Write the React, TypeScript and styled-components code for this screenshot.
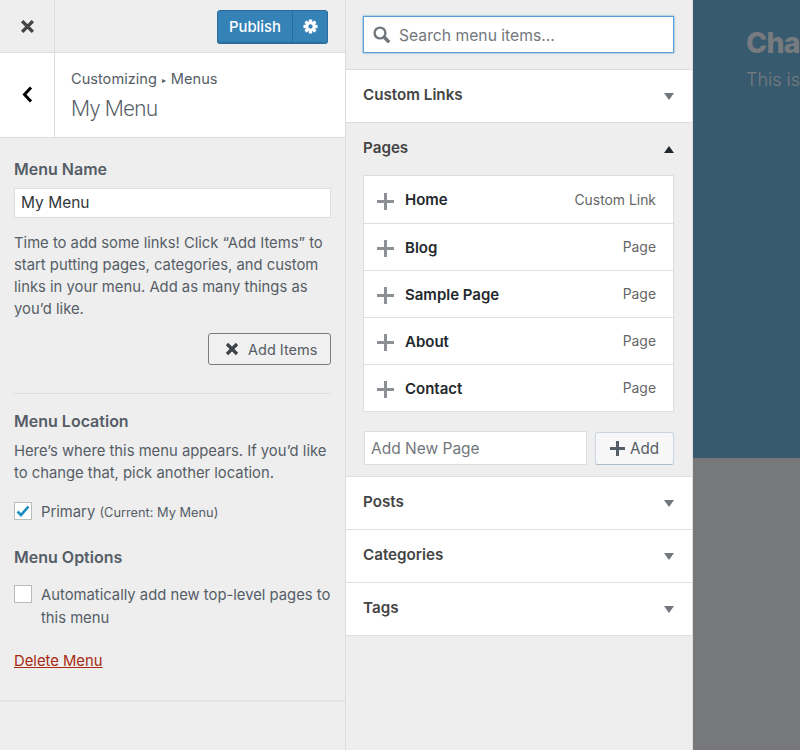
import { createGlobalStyle, styled } from "styled-components";
import type { ReactNode } from "react";

const GlobalStyle = createGlobalStyle`
  html, body {
    margin: 0;
    height: 100%;
    overflow: hidden;
    background: #eeeeee;
    font-family: Inter, "Liberation Sans", sans-serif;
    -webkit-font-smoothing: antialiased;
  }
  * { box-sizing: border-box; }
`;

const Page = styled.div`
  display: grid;
  grid-template-columns: 346px 347px 107px;
  width: 800px;
  height: 750px;
  overflow: hidden;
`;

const Sidebar = styled.aside`
  display: flex;
  flex-direction: column;
  border-right: 1px solid #dddddd;
  background: #eeeeee;
  color: #555d66;
`;

const TopBar = styled.header`
  display: flex;
  height: 53px;
  border-bottom: 1px solid #dddddd;
`;

const CloseButton = styled.div`
  width: 55px;
  display: flex;
  align-items: center;
  justify-content: center;
  padding-left: 1px;
  border-right: 1px solid #dddddd;
  color: #444;
`;

const PublishArea = styled.div`
  flex: 1;
  display: flex;
  justify-content: flex-end;
  padding: 10px 17px 0 0;
`;

const PublishGroup = styled.div`
  display: flex;
  height: 33px;
  border-radius: 3px;
  background: #3582b7;
  border: 1px solid #2a6d9c;
  color: #fff;
  box-shadow: 0 1px 0 #2a6d9c;
`;

const PublishLabel = styled.span`
  display: flex;
  align-items: center;
  padding: 0 11px;
  width: 75px;
  font-size: 14.8px;
  font-weight: 500;
  border-right: 1px solid #2a6d9c;
`;

const PublishGear = styled.span`
  width: 34px;
  display: flex;
  align-items: center;
  justify-content: center;
`;

const TitleBar = styled.div`
  display: flex;
  height: 85px;
  background: #fff;
  border-bottom: 1px solid #dddddd;
`;

const BackButton = styled.div`
  width: 55px;
  display: flex;
  align-items: center;
  justify-content: center;
  padding-bottom: 2px;
  border-right: 1px solid #dddddd;
`;

const TitleText = styled.div`
  padding: 17px 0 0 16px;
`;

const Crumb = styled.div`
  font-size: 14.6px;
  line-height: 18px;
  color: #555d66;
`;

const CrumbArrow = styled.span`
  font-size: 8px;
  margin: 0 5px;
  vertical-align: 1px;
`;

const PanelTitle = styled.div`
  font-family: Roboto, Inter, sans-serif;
  font-size: 22px;
  font-weight: 300;
  line-height: 28px;
  margin-top: 6px;
  letter-spacing: -0.4px;
  color: #555d66;
`;

const Controls = styled.div`
  padding: 21px 14px 0;
  height: 564px;
  border-bottom: 2px solid #e4e4e4;
  flex: none;
`;

const Heading = styled.h3<{ $top?: number }>`
  margin: ${({ $top }) => $top ?? 0}px 0 0;
  font-size: 16px;
  line-height: 20px;
  font-weight: 600;
  color: #555d66;
`;

const NameInput = styled.div`
  height: 30px;
  margin-top: 9px;
  padding: 0 0 1px 6px;
  display: flex;
  align-items: center;
  background: #fff;
  border: 1px solid #dddddd;
  font-size: 15.5px;
  color: #32373c;
`;

const Help = styled.p<{ $top: number }>`
  margin: ${({ $top }) => $top}px 0 0;
  font-size: 14.8px;
  line-height: 22px;
  color: #555d66;
`;

const ButtonRow = styled.div`
  display: flex;
  justify-content: flex-end;
  margin-top: 13px;
`;

const AddItemsButton = styled.div`
  width: 123px;
  height: 32px;
  display: flex;
  align-items: center;
  gap: 9px;
  padding-left: 16px;
  background: #f0f0f0;
  border: 1px solid #777d83;
  border-radius: 3px;
  font-size: 14.5px;
  color: #555d66;
  & > svg {
    color: #3c4146;
  }
`;

const Divider = styled.hr`
  margin: 28px 0 0;
  border: 0;
  border-top: 1px solid #dddddd;
`;

const CheckRow = styled.label<{ $top: number }>`
  display: flex;
  gap: 9px;
  margin-top: ${({ $top }) => $top}px;
  font-size: 14.8px;
  line-height: 23px;
  color: #555d66;
`;

const CheckBox = styled.span`
  flex: none;
  width: 18px;
  height: 18px;
  margin-top: 1px;
  display: flex;
  align-items: center;
  justify-content: center;
  background: #fff;
  border: 1px solid #bbbbbb;
`;

const Current = styled.span`
  font-size: 12.8px;
`;

const DeleteLink = styled.a`
  display: block;
  margin-top: 21px;
  font-size: 14.8px;
  line-height: 20px;
  color: #a82a12;
  text-decoration: underline;
`;

const ItemsPanel = styled.section`
  background: #eeeeee;
  border-right: 1px solid #dddddd;
  color: #32373c;
`;

const SearchArea = styled.div`
  height: 70px;
  padding: 16px 18px 0 17px;
  border-bottom: 1px solid #dddddd;
`;

const SearchBox = styled.div`
  height: 37px;
  display: flex;
  align-items: center;
  gap: 8px;
  padding: 1px 0 0 9px;
  background: #fff;
  border: 1px solid #5b9dd9;
  box-shadow: 0 0 2px rgba(30, 140, 190, 0.8);
  font-size: 15.7px;
  color: #72777c;
`;

const SectionHead = styled.div<{ $open?: boolean }>`
  height: ${({ $open }) => ($open ? 52 : 53)}px;
  padding: 0 18px 3px 17px;
  display: flex;
  align-items: center;
  justify-content: space-between;
  background: ${({ $open }) => ($open ? "transparent" : "#fff")};
  border-bottom: ${({ $open }) => ($open ? "0" : "1px solid #dddddd")};
  font-size: 15.2px;
  font-weight: 600;
  color: #444;
`;

const Caret = styled.span<{ $up?: boolean }>`
  width: 0;
  height: 0;
  margin-top: 3px;
  border-left: 5px solid transparent;
  border-right: 5px solid transparent;
  ${({ $up }) =>
    $up ? "border-bottom: 7px solid #23282d;" : "border-top: 7px solid #72777c;"}
`;

const PagesBody = styled.div`
  padding: 0 18px 11px 17px;
  border-bottom: 1px solid #dddddd;
`;

const PageList = styled.div`
  background: #fff;
  border: 1px solid #dddddd;
`;

const PageRow = styled.div`
  height: 47px;
  display: flex;
  align-items: center;
  padding: 0 17px 0 13px;
  font-size: 15px;
  & + & {
    border-top: 1px solid #dddddd;
  }
  & > svg {
    margin-top: 3px;
  }
`;

const PageName = styled.span`
  flex: 1;
  margin-left: 11px;
  font-weight: 600;
  color: #23282d;
`;

const PageType = styled.span`
  font-size: 13.9px;
  color: #666;
`;

const AddRow = styled.div`
  display: flex;
  justify-content: space-between;
  padding: 19px 0 0 1px;
`;

const NewPageInput = styled.div`
  width: 223px;
  height: 34px;
  display: flex;
  align-items: center;
  padding: 1px 0 0 6px;
  background: #fff;
  border: 1px solid #dddddd;
  font-size: 15.5px;
  color: #72777c;
`;

const AddButton = styled.div`
  width: 79px;
  height: 33px;
  margin-top: 1px;
  display: flex;
  align-items: center;
  justify-content: center;
  gap: 5px;
  background: #f7f7f7;
  border: 1px solid #cad5df;
  border-bottom-color: #a9bccb;
  border-radius: 3px;
  font-size: 15.2px;
  color: #555d66;
`;

const Preview = styled.main`
  display: flex;
  flex-direction: column;
  overflow: hidden;
  background: #77787c;
`;

const Hero = styled.div`
  height: 458px;
  padding: 25px 0 0 53px;
  background: #375a6f;
  color: #777a7e;
  white-space: nowrap;
`;

const HeroTitle = styled.div`
  font-size: 28.5px;
  line-height: 36px;
  font-weight: 800;
  letter-spacing: -0.8px;
`;

const HeroText = styled.div`
  margin-top: 6px;
  font-size: 18px;
  line-height: 26px;
  font-weight: 300;
`;

function CloseIcon({ size }: { size: number }) {
  return (
    <svg width={size} height={size} viewBox="0 0 14 14" aria-hidden="true">
      <path d="M2 2l10 10M12 2L2 12" stroke="currentColor" strokeWidth="3.2" />
    </svg>
  );
}

function GearIcon() {
  const teeth = [0, 45, 90, 135];
  return (
    <svg width="15" height="15" viewBox="0 0 16 16" aria-hidden="true">
      {teeth.map((angle) => (
        <rect
          key={angle}
          x="6.2"
          y="0.5"
          width="3.6"
          height="15"
          rx="0.6"
          fill="#fff"
          transform={`rotate(${angle} 8 8)`}
        />
      ))}
      <circle cx="8" cy="8" r="5.3" fill="#fff" />
      <circle cx="8" cy="8" r="2.3" fill="#3582b7" />
    </svg>
  );
}

function PlusIcon({ color, size, weight }: { color: string; size: number; weight: number }) {
  return (
    <svg width={size} height={size} viewBox={`0 0 ${size} ${size}`} aria-hidden="true">
      <path
        d={`M0 ${size / 2}H${size}M${size / 2} 0V${size}`}
        stroke={color}
        strokeWidth={weight}
      />
    </svg>
  );
}

function Section({ title }: { title: string }) {
  return (
    <SectionHead>
      {title}
      <Caret />
    </SectionHead>
  );
}

function PageItem({ name, type }: { name: string; type: string }): ReactNode {
  return (
    <PageRow>
      <PlusIcon color="#8c8f94" size={17} weight={3} />
      <PageName>{name}</PageName>
      <PageType>{type}</PageType>
    </PageRow>
  );
}

export default function App() {
  return (
    <>
      <GlobalStyle />
      <Page>
        <Sidebar>
          <TopBar>
            <CloseButton>
              <CloseIcon size={15} />
            </CloseButton>
            <PublishArea>
              <PublishGroup>
                <PublishLabel>Publish</PublishLabel>
                <PublishGear>
                  <GearIcon />
                </PublishGear>
              </PublishGroup>
            </PublishArea>
          </TopBar>
          <TitleBar>
            <BackButton>
              <svg width="11" height="17" viewBox="0 0 11 17" aria-hidden="true">
                <path d="M9 1.5L2.5 8.5L9 15.5" fill="none" stroke="#000" strokeWidth="3" />
              </svg>
            </BackButton>
            <TitleText>
              <Crumb>
                Customizing<CrumbArrow>▸</CrumbArrow>Menus
              </Crumb>
              <PanelTitle>My Menu</PanelTitle>
            </TitleText>
          </TitleBar>
          <Controls>
            <Heading>Menu Name</Heading>
            <NameInput>My Menu</NameInput>
            <Help $top={14}>
              Time to add some links! Click “Add Items” to start putting pages, categories, and
              custom links in your menu. Add as many things as you’d like.
            </Help>
            <ButtonRow>
              <AddItemsButton>
                <CloseIcon size={14} />
                Add Items
              </AddItemsButton>
            </ButtonRow>
            <Divider />
            <Heading $top={17}>Menu Location</Heading>
            <Help $top={9}>
              Here’s where this menu appears. If you’d like to change that, pick another location.
            </Help>
            <CheckRow $top={17}>
              <CheckBox>
                <svg width="14" height="12" viewBox="0 0 14 12" aria-hidden="true">
                  <path d="M1.5 6.5L5 10L12.5 1.5" fill="none" stroke="#1e8cbe" strokeWidth="2.6" />
                </svg>
              </CheckBox>
              <span>
                Primary <Current>(Current: My Menu)</Current>
              </span>
            </CheckRow>
            <Heading $top={23}>Menu Options</Heading>
            <CheckRow $top={17}>
              <CheckBox />
              <span>Automatically add new top-level pages to this menu</span>
            </CheckRow>
            <DeleteLink>Delete Menu</DeleteLink>
          </Controls>
        </Sidebar>
        <ItemsPanel>
          <SearchArea>
            <SearchBox>
              <svg width="18" height="18" viewBox="0 0 18 18" aria-hidden="true">
                <circle cx="7" cy="7" r="5.4" fill="none" stroke="#72777c" strokeWidth="2.4" />
                <path d="M10.8 10.8L16.2 16.2" stroke="#72777c" strokeWidth="3.4" />
              </svg>
              Search menu items…
            </SearchBox>
          </SearchArea>
          <Section title="Custom Links" />
          <SectionHead $open>
            Pages
            <Caret $up />
          </SectionHead>
          <PagesBody>
            <PageList>
              <PageItem name="Home" type="Custom Link" />
              <PageItem name="Blog" type="Page" />
              <PageItem name="Sample Page" type="Page" />
              <PageItem name="About" type="Page" />
              <PageItem name="Contact" type="Page" />
            </PageList>
            <AddRow>
              <NewPageInput>Add New Page</NewPageInput>
              <AddButton>
                <PlusIcon color="#555d66" size={15} weight={3} />
                Add
              </AddButton>
            </AddRow>
          </PagesBody>
          <Section title="Posts" />
          <Section title="Categories" />
          <Section title="Tags" />
        </ItemsPanel>
        <Preview>
          <Hero>
            <HeroTitle>Cha</HeroTitle>
            <HeroText>This is</HeroText>
          </Hero>
        </Preview>
      </Page>
    </>
  );
}
